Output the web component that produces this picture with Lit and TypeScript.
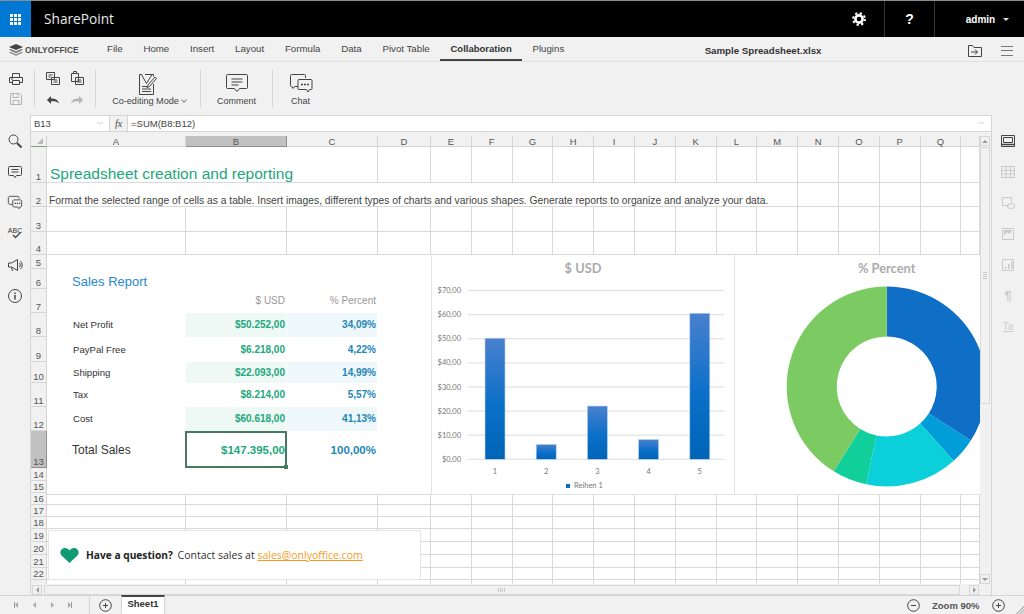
import { LitElement, html, css, svg } from "lit";
import { customElement } from "lit/decorators.js";

const TABS = ["File", "Home", "Insert", "Layout", "Formula", "Data", "Pivot Table", "Collaboration", "Plugins"];
const COLS = ["A", "B", "C", "D", "E", "F", "G", "H", "I", "J", "K", "L", "M", "N", "O", "P", "Q", ""];
const ROW_COUNT = 23;

const REPORT = [
  { label: "Net Profit", usd: "$50.252,00", pct: "34,09%", band: true },
  { label: "PayPal Free", usd: "$6.218,00", pct: "4,22%", band: false },
  { label: "Shipping", usd: "$22.093,00", pct: "14,99%", band: true },
  { label: "Tax", usd: "$8.214,00", pct: "5,57%", band: false },
  { label: "Cost", usd: "$60.618,00", pct: "41,13%", band: true },
];

const BARS = [50.25, 6.2, 22.1, 8.2, 60.6];
const SLICES = [
  { pct: 34.09, color: "#0f6fc6" },
  { pct: 4.22, color: "#009dd9" },
  { pct: 14.99, color: "#0bd0d9" },
  { pct: 5.57, color: "#10cf9b" },
  { pct: 41.13, color: "#7cca62" },
];

const icon = (size: number, body: unknown, cls = "") =>
  html`<svg class="i ${cls}" width=${size} height=${size} viewBox="0 0 ${size} ${size}">${body}</svg>`;

const ICONS = {
  print: svg`<path d="M4.5 6V2.5h7V6M4.5 11.5H1.5v-5h13v5h-3M4.5 9.5h7v4h-7z"/><path d="M3 8h2" />`,
  save: svg`<path d="M2.5 2.5h9l2 2v9h-11zM5 2.5v4h5v-4M5 13.5v-4h6v4"/>`,
  copy: svg`<path d="M1.5 2.5h8v7h-8zM6.5 7.5h8v7h-8zM3.5 5h4M3.5 7h2M8.5 10h4M8.5 12h4"/>`,
  paste: svg`<path d="M2.5 3.5h7v8h-7zM4.5 3.5v-2h3v2M6.5 7.5h8v7h-8zM8.5 10h4M8.5 12h4"/>`,
  undo: svg`<path class="solid" d="M2 8l4-4v2.5c4 0 7 1 8 5-2-2-4-2.5-8-2.3V12z"/>`,
  redo: svg`<path class="solid" d="M14 8l-4-4v2.5c-4 0-7 1-8 5 2-2 4-2.5 8-2.3V12z"/>`,
  coedit: svg`<path d="M6 2.5H3.5v20h14V12M15 2.5h2.5v2M6 17h9M6 19.5h9M6 14.5h5M5.5 2.5l5 9M9 2.5h7l-5.5 9M12 13l7-8 1.5 1.5-7 8-2.5 1z"/>`,
  comment: svg`<path d="M2.5 2.5h19a1 1 0 0 1 1 1v12a1 1 0 0 1-1 1h-7L12 19.5l-2.500-3h-7a1 1 0 0 1-1-1v-12a1 1 0 0 1 1-1zM6.5 7h11M6.5 10h11M6.5 13h7"/>`,
  chat: svg`<path d="M9 14.5H5.5l-1.5 2-1-2h-.5a1 1 0 0 1-1-1v-10a1 1 0 0 1 1-1h13a1 1 0 0 1 1 1V6M10 7.5h12a1 1 0 0 1 1 1v8a1 1 0 0 1-1 1h-1.5L19 20l-1.5-2.500H10a1 1 0 0 1-1-1v-8a1 1 0 0 1 1-1z"/><path d="M12 12.5h2M15 12.5h2M18 12.5h2" stroke-width="1.5"/>`,
  search: svg`<circle cx="6.5" cy="6.5" r="4.5"/><path d="M10 10l4.5 4.5" stroke-width="2"/>`,
  sideComment: svg`<path d="M2.5 2.5h11a1 1 0 0 1 1 1v7a1 1 0 0 1-1 1H9.5L8 13.5l-1.5-2h-4a1 1 0 0 1-1-1v-7a1 1 0 0 1 1-1zM4.5 5.5h7M4.5 8h7"/>`,
  sideChat: svg`<path d="M6 10.5H2.5l-1-1v-7l1-1h10l1 1V4M7.5 5.5h8l1 1v6l-1 1h-1l-1 2-1.5-2H7.5l-1-1v-6z"/><path d="M8.5 9.5H10M11 9.5h1.5M13.5 9.5H15" stroke-width="1.5"/>`,
  check: svg`<path d="M5 12l2.5 2.5 5-5" stroke-width="1.3"/>`,
  speaker: svg`<path d="M1.5 6h3l6-3.5v11l-6-3.5h-3zM4.5 10.5l1 3.5M12.5 6a3 3 0 0 1 0 4M13.5 4a5.5 5.5 0 0 1 0 8"/>`,
  info: svg`<circle cx="8" cy="8" r="6.5"/><path d="M8 7v4.5" stroke-width="1.5"/><path d="M8 4.5V6" stroke-width="1.5"/>`,
  cell: svg`<path d="M1.5 2.5h13v11h-13zM3.5 4.5h9v5h-9z"/><path d="M1.5 11.5h13" stroke-width="1.5"/>`,
  table: svg`<path d="M1.5 2.5h13v11h-13zM1.5 6.5h13M1.5 10h13M6 2.5v11M10.5 2.5v11"/>`,
  shape: svg`<path d="M9 10.5H2.5v-8h9v5"/><ellipse cx="11" cy="11" rx="4" ry="2.5"/>`,
  image: svg`<path d="M2.5 2.5h11v11h-11z"/><path class="solid" d="M4 10l3-4 2 2 3-3V4H4z"/>`,
  chart: svg`<path d="M2.5 2.5h11v11h-11z"/><path class="solid" d="M5 12h1.5v-2H5zM8 12h1.5V7H8zM11 12h1.5V4.5H11z"/>`,
  folder: svg`<path d="M1.5 13.5v-11h4L7 4.5h7.5v9zM4 9h6.5M8 6.5L10.5 9 8 11.5"/>`,
  minus: svg`<circle cx="6.5" cy="6.5" r="5.8"/><path d="M4 6.5h5"/>`,
  plus: svg`<circle cx="6.5" cy="6.5" r="5.8"/><path d="M4 6.5h5M6.5 4v5"/>`,
};

@customElement("app-root")
export class AppRoot extends LitElement {
  static styles = css`
    :host {
      display: flex;
      flex-direction: column;
      width: 1024px;
      height: 614px;
      overflow: hidden;
      background: #f1f1f1;
      font-family: "Liberation Sans", Arial, sans-serif;
      color: #444;
    }
    .i { fill: none; stroke: #444; stroke-width: 1; display: block; flex: none; }
    .i .solid { fill: #444; stroke: none; }
    .faded { opacity: 0.35; }
    .faint { opacity: 0.22; }

    .top {
      height: 36px;
      flex: none;
      display: flex;
      align-items: stretch;
      background: #000;
      border-top: 1px solid #8c8c8c;
      color: #fff;
    }
    .waffle {
      width: 31px;
      background: #0078d4;
      display: flex;
      align-items: center;
      justify-content: center;
    }
    .dots {
      display: grid;
      grid-template-columns: repeat(3, 3px);
      grid-auto-rows: 3px;
      gap: 1px;
    }
    .dots span { background: #fff; }
    .brand {
      margin-left: 13px;
      font: 13.7px "Open Sans", sans-serif;
      line-height: 35px;
      color: #e8e8e8;
      flex: 1;
    }
    .topbtn {
      display: flex;
      align-items: center;
      justify-content: center;
      border-left: 1px solid #333;
    }
    .gear { width: 50px; border: 0; padding-left: 0; }
    .help { width: 49px; font-size: 14px; font-weight: 700; }
    .user { width: 90px; font-size: 10px; font-weight: 700; gap: 8px; padding-left: 16px; box-sizing: border-box; }
    .caret { width: 0; height: 0; border: 3px solid transparent; border-top: 3px solid #ddd; border-bottom: 0; }

    .menu {
      height: 24px;
      flex: none;
      display: flex;
      align-items: stretch;
      border-bottom: 1px solid #e0e0e0;
    }
    .logo {
      width: 96.6px;
      box-sizing: border-box;
      padding: 1px 0 0 9px;
      display: flex;
      align-items: center;
      gap: 2px;
      font-size: 8.3px;
      font-weight: 700;
      letter-spacing: 0.1px;
      color: #4a4a4a;
    }
    .tab {
      padding: 0 10.4px;
      font-size: 9.7px;
      line-height: 24px;
      color: #444;
    }
    .tab.on {
      font-size: 9.5px;
      font-weight: 700;
      color: #333;
      box-shadow: inset 0 -2px 0 #444;
    }
    .title {
      margin-left: 130px;
      font-size: 9.7px;
      font-weight: 700;
      line-height: 28px;
      color: #333;
      flex: 1;
    }
    .menuicons {
      display: flex;
      align-items: center;
      gap: 18px;
      padding: 3px 11px 0 0;
    }
    .burger { width: 12px; height: 8px; border-top: 1px solid #777; border-bottom: 1px solid #777; position: relative; }
    .burger::after { content: ""; position: absolute; left: 0; right: 0; top: 3px; border-top: 1px solid #777; }

    .tools {
      height: 53px;
      flex: none;
      display: flex;
      align-items: center;
      box-sizing: border-box;
      padding-left: 8px;
    }
    .sep { width: 1px; height: 37px; background: #d5d5d5; flex: none; }
    .pair {
      display: flex;
      flex-direction: column;
      gap: 4px;
      margin-right: 10px;
    }
    .quad {
      display: grid;
      grid-template-columns: 16px 16px;
      column-gap: 8px;
      row-gap: 6px;
      margin: 0 10px;
    }
    .big {
      display: flex;
      flex-direction: column;
      align-items: center;
      justify-content: flex-end;
      height: 40px;
      margin-bottom: 6px;
      font-size: 9px;
      color: #444;
    }
    .big small {
      display: inline-block;
      width: 3px;
      height: 3px;
      margin: 0 0 2px 3px;
      border-right: 1px solid #888;
      border-bottom: 1px solid #888;
      transform: rotate(45deg);
    }
    .big.coedit { width: 104px; font-size: 9.1px; }
    .big.coedit div { padding-left: 2px; }
    .big.cmt { width: 71px; }
    .big.chat { width: 55px; }

    .body { flex: 1; min-height: 0; display: flex; }
    .side {
      width: 30px;
      flex: none;
      border-right: 1px solid #d5d5d5;
      display: flex;
      flex-direction: column;
      align-items: center;
      padding-top: 18px;
      box-sizing: content-box;
    }
    .side.left { gap: 15px; }
    .side.left svg { height: 16px; }
    .abc { font-size: 7px; font-weight: 400; line-height: 9px; color: #333; height: 16px; position: relative; }
    .abc svg { position: absolute; left: 0; top: -3px; }
    .side.right {
      width: 32px;
      border-right: 0;
      border-left: 1px solid #d5d5d5;
      gap: 15px;
    }
    .glyph { height: 16px; line-height: 16px; font-size: 13px; color: #444; opacity: 0.22; font-weight: 700; }
    .glyph.ta { font-size: 10px; font-weight: 400; text-decoration: underline; }

    .main { flex: 1; min-width: 0; display: flex; flex-direction: column; }
    .fbar {
      height: 17px;
      flex: none;
      display: flex;
      background: #fff;
      border-top: 1px solid #d5d5d5;
      border-bottom: 1px solid #d5d5d5;
      box-sizing: border-box;
      font-size: 9.5px;
      line-height: 15px;
      color: #444;
    }
    .name {
      width: 79px;
      box-sizing: border-box;
      padding-left: 3px;
      display: flex;
      justify-content: space-between;
      align-items: center;
      padding-right: 5px;
      border-right: 1px solid #d5d5d5;
    }
    .chev { font-size: 7px; color: #888; }
    .fx {
      width: 17px;
      text-align: center;
      background: #f1f1f1;
      font: italic 10px "Liberation Serif", serif;
      line-height: 15px;
      border-right: 1px solid #d5d5d5;
    }
    .formula { flex: 1; padding-left: 3px; font-size: 9.5px; }
    .fbar .end { padding-right: 6px; }

    .sheetrow { flex: none; height: 448px; margin-top: 4px; display: flex; }
    .view {
      position: relative;
      width: 949px;
      overflow: hidden;
      background: #fff;
    }
    .grid {
      display: grid;
      grid-template-columns: 16px 139px 101px 91px 53px repeat(13, 40.8px) 19px;
      grid-template-rows: 11px 36px 24px 25px 23px 14px 20px 24px 24px 25px 21px 24px 24px 37px 13px 12px 12px 12px 12px 13px 13px 13px 12px 13px;
    }
    .cell {
      border-right: 1px solid #d9d9d9;
      border-bottom: 1px solid #d9d9d9;
      min-width: 0;
      white-space: nowrap;
    }
    .span3 { grid-column: span 3; }
    .span13 { grid-column: span 13; }
    .h1 {
      font-size: 15.5px;
      color: #22a77c;
      line-height: 17px;
      padding: 18px 0 0 3px;
    }
    .h2 {
      font-size: 10.3px;
      color: #444;
      line-height: 12px;
      padding: 12px 0 0 2px;
    }
    .corner, .colh, .rowh {
      background: #f1f1f1;
      font-size: 9.5px;
      color: #555;
      border-right: 1px solid #d5d5d5;
      border-bottom: 1px solid #d5d5d5;
      box-sizing: border-box;
      text-align: center;
    }
    .colh { line-height: 12px; }
    .rowh {
      display: flex;
      align-items: flex-end;
      justify-content: center;
      line-height: 11px;
      overflow: hidden;
    }
    .corner { position: relative; border-bottom: 1px solid #7f9f7f; }
    .corner::after {
      content: "";
      position: absolute;
      right: 3px;
      bottom: 2px;
      border: 3px solid transparent;
      border-right-color: #bbb;
      border-bottom-color: #bbb;
    }
    .colh.sel, .rowh.sel {
      background: #c1c1c1;
      border-color: #8f8f8f;
    }

    .report {
      position: absolute;
      left: 16px;
      top: 119px;
      width: 384px;
      height: 239px;
      background: #fff;
      border-bottom: 1px solid #d9d9d9;
      display: grid;
      grid-template-columns: 139px 101px 91px;
      grid-template-rows: 34px 24px 24px 25px 21px 24px 24px 37px;
      align-items: stretch;
      color: #333;
    }
    .rc {
      display: flex;
      align-items: center;
      font-size: 9.6px;
      padding: 0 0 1px 26px;
    }
    .rt { grid-column: span 3; font-size: 13px; color: #2a88d0; padding: 19px 0 0 25px; }
    .rv {
      display: flex;
      align-items: center;
      justify-content: flex-end;
      font-size: 10px;
      font-weight: 700;
      padding-bottom: 1px;
    }
    .usd { color: #22a77c; margin-right: 1px; padding-right: 1px; }
    .pct { color: #1d86b5; margin-right: 1px; padding-right: 1px; }
    .usd.band { background: #eef8f5; }
    .pct.band { background: #eef7fa; }
    .muted { color: #999; font-weight: 400; padding-right: 2px; }
    .big-l { font-size: 12px; padding: 0 0 0 25px; }
    .total { font-size: 11.5px; padding-bottom: 0; }
    .selected {
      position: relative;
      margin: 0 0 0 -1px;
      border: 2px solid #46795f;
      box-sizing: border-box;
      padding-right: 0;
    }
    .selected::after {
      content: "";
      position: absolute;
      right: -3px;
      bottom: -3px;
      width: 4px;
      height: 4px;
      background: #46795f;
      border: 0;
    }

    .chart {
      position: absolute;
      top: 119px;
      height: 240px;
      background: #fff;
      border-left: 1px solid #e3e3e3;
      border-bottom: 1px solid #e3e3e3;
      box-sizing: border-box;
      overflow: hidden;
    }
    .chart.bars { left: 400px; width: 303px; }
    .chart.donut { left: 703px; width: 246px; }
    .chart svg { display: block; position: absolute; left: -1px; top: 0; }
    .axis { font: 7.5px Lato, sans-serif; fill: #777; }
    .ctitle { font: 700 12.8px Lato, sans-serif; fill: #ababab; }

    .contact {
      position: absolute;
      left: 17px;
      top: 394px;
      width: 373px;
      height: 50px;
      background: #fff;
      border: 1px solid #e6e6e6;
      box-sizing: border-box;
      display: flex;
      align-items: center;
      padding-left: 11px;
      font: 10.5px "Open Sans", sans-serif;
      color: #333;
      white-space: pre;
    }
    .contact svg { margin-right: 7px; }
    .contact b { font-size: 10.2px; font-weight: 700; margin-right: 2px; color: #222; }
    .contact a { color: #f59b23; text-decoration: underline; }

    .vscroll {
      width: 11px;
      margin-left: 0;
      flex: none;
      display: flex;
      flex-direction: column;
      box-sizing: border-box;
    }
    .sb-btn {
      flex: none;
      width: 10px;
      height: 10px;
      box-sizing: border-box;
      border: 1px solid #d5d5d5;
      background: #f1f1f1;
      display: flex;
      align-items: center;
      justify-content: center;
    }
    .tri { width: 0; height: 0; border: 3px solid transparent; }
    .tri.up { border-bottom-color: #999; border-top: 0; }
    .tri.down { border-top-color: #999; border-bottom: 0; }
    .tri.l { border-right-color: #999; border-left: 0; }
    .tri.r { border-left-color: #999; border-right: 0; }
    .vthumb {
      height: 257px;
      width: 10px;
      margin-top: 1px;
      box-sizing: border-box;
      border: 1px solid #d9d9d9;
      display: flex;
      align-items: center;
      justify-content: center;
      flex: none;
    }
    .grip { width: 4px; height: 8px; background: repeating-linear-gradient(#c8c8c8 0 1px, transparent 1px 2px); }
    .grip.h { width: 8px; height: 4px; background: repeating-linear-gradient(90deg, #c8c8c8 0 1px, transparent 1px 2px); }
    .spacer { flex: 1; }
    .hscroll {
      height: 10px;
      flex: none;
      margin-top: 1px;
      display: flex;
      gap: 2px;
      padding-left: 1px;
    }
    .hthumb {
      width: 916px;
      box-sizing: border-box;
      border: 1px solid #d9d9d9;
      display: flex;
      align-items: center;
      justify-content: center;
    }
    .hscroll .sb-btn:last-child { margin-left: 7px; }

    .bottom {
      height: 19px;
      flex: none;
      display: flex;
      align-items: stretch;
      border-top: 1px solid #d5d5d5;
      box-sizing: border-box;
      position: relative;
    }
    .nav {
      width: 90px;
      box-sizing: border-box;
      border-right: 1px solid #d5d5d5;
      display: flex;
      align-items: center;
      gap: 12px;
      padding-left: 13px;
    }
    .nav .n { width: 6px; display: flex; justify-content: center; align-items: center; }
    .nav .tri { border-width: 3px; opacity: 0.8; }
    .nav .bar { width: 1px; height: 6px; background: #999; flex: none; }
    .addsheet { width: 31px; display: flex; align-items: center; justify-content: center; }
    .sheet {
      width: 44px;
      background: #fff;
      border-top: 2px solid #444;
      border-right: 1px solid #d5d5d5;
      border-left: 1px solid #d5d5d5;
      box-sizing: border-box;
      text-align: center;
      font-size: 9.5px;
      font-weight: 700;
      line-height: 14px;
      color: #333;
      margin-top: -1px;
    }
    .zoom {
      margin-left: auto;
      display: flex;
      align-items: center;
      gap: 12px;
      padding-right: 19px;
      font-size: 9.5px;
      font-weight: 700;
      color: #555;
    }
    .zoom span { width: 48px; white-space: nowrap; }
    .hatch {
      position: absolute;
      right: 0;
      bottom: 0;
      width: 9px;
      height: 9px;
      background: repeating-linear-gradient(135deg, transparent 0 1px, #bbb 1px 2px);
      clip-path: polygon(100% 0, 100% 100%, 0 100%);
    }
  `;

  private renderCells() {
    const cells = [];
    cells.push(html`<div class="corner"></div>`);
    for (const c of COLS) cells.push(html`<div class="colh ${c === "B" ? "sel" : ""}">${c}</div>`);
    for (let r = 1; r <= ROW_COUNT; r++) {
      cells.push(html`<div class="rowh ${r === 13 ? "sel" : ""}">${r}</div>`);
      if (r === 1) {
        cells.push(html`<div class="cell span3 h1">Spreadsheet creation and reporting</div>`);
        for (let i = 3; i < COLS.length; i++) cells.push(html`<div class="cell"></div>`);
      } else if (r === 2) {
        cells.push(html`<div class="cell span13 h2">Format the selected range of cells as a table. Insert images, different types of charts and various shapes. Generate reports to organize and analyze your data.</div>`);
        for (let i = 13; i < COLS.length; i++) cells.push(html`<div class="cell"></div>`);
      } else {
        for (let i = 0; i < COLS.length; i++) cells.push(html`<div class="cell"></div>`);
      }
    }
    return cells;
  }

  private renderBars() {
    const base = 204.3;
    const unit = 2.41;
    const ticks = [0, 10, 20, 30, 40, 50, 60, 70];
    return svg`
      <defs>
        <linearGradient id="barfill" x1="0" y1="0" x2="0" y2="1">
          <stop offset="0" stop-color="#4a80ce" />
          <stop offset="0.55" stop-color="#0b70c8" />
          <stop offset="1" stop-color="#0064b6" />
        </linearGradient>
      </defs>
      <text class="ctitle" x="152" y="18" text-anchor="middle">$ USD</text>
      ${ticks.map((t) => {
        const y = base - t * unit;
        return svg`
          <line x1="37" x2="293" y1=${y} y2=${y} stroke="#dcdcdc" />
          <text class="axis" x="30" y=${y + 2.5} text-anchor="end">$${t},00</text>`;
      })}
      ${BARS.map((v, i) => {
        const x = 54 + i * 51.2;
        return svg`
          <rect x=${x} y=${base - v * unit} width="20" height=${v * unit} fill="url(#barfill)" stroke="#b9d3ef" stroke-width="0.6" />
          <text class="axis" x=${x + 10} y="219" text-anchor="middle">${i + 1}</text>`;
      })}
      <rect x="135" y="229" width="4" height="4" fill="#0b6ec4" />
      <text class="axis" x="143" y="233">Reihen 1</text>`;
  }

  private renderDonut() {
    const cx = 152.7;
    const cy = 131.5;
    const R = 100;
    const r = 50;
    let a = 0;
    const pt = (rad: number, ang: number) => {
      const t = (ang * Math.PI) / 180;
      return `${(cx + rad * Math.sin(t)).toFixed(2)} ${(cy - rad * Math.cos(t)).toFixed(2)}`;
    };
    return svg`
      <text class="ctitle" x=${cx} y="18" text-anchor="middle">% Percent</text>
      ${SLICES.map((s) => {
        const from = a;
        const to = a + (s.pct * 360) / 100;
        a = to;
        const large = to - from > 180 ? 1 : 0;
        const d = `M${pt(R, from)} A${R} ${R} 0 ${large} 1 ${pt(R, to)} L${pt(r, to)} A${r} ${r} 0 ${large} 0 ${pt(r, from)} Z`;
        return svg`<path d=${d} fill=${s.color} />`;
      })}`;
  }

  render() {
    return html`
      <div class="top">
        <div class="waffle"><div class="dots">${Array.from({ length: 9 }, () => html`<span></span>`)}</div></div>
        <div class="brand">SharePoint</div>
        <div class="topbtn gear">
          <svg width="14" height="14" viewBox="0 0 14 14">
            <circle cx="7" cy="7" r="3.6" fill="none" stroke="#fff" stroke-width="2.6" />
            <circle cx="7" cy="7" r="5.9" fill="none" stroke="#fff" stroke-width="2" stroke-dasharray="2.3 2.33" />
          </svg>
        </div>
        <div class="topbtn help">?</div>
        <div class="topbtn user">admin <span class="caret"></span></div>
      </div>

      <div class="menu">
        <div class="logo">
          <svg width="14" height="12" viewBox="0 0 14 12">
            <path d="M7 0l7 3-7 3-7-3z" fill="#444" />
            <path d="M1.5 5L7 7.4 12.5 5 14 5.8 7 8.9 0 5.8z" fill="#666" />
            <path d="M1.5 7.8L7 10.2l5.5-2.4 1.5.8L7 11.7 0 8.6z" fill="#888" />
          </svg>
          ONLYOFFICE
        </div>
        ${TABS.map((t) => html`<div class="tab ${t === "Collaboration" ? "on" : ""}">${t}</div>`)}
        <div class="title">Sample Spreadsheet.xlsx</div>
        <div class="menuicons">
          ${icon(16, ICONS.folder)}
          <div class="burger"></div>
        </div>
      </div>

      <div class="tools">
        <div class="pair">
          ${icon(16, ICONS.print)}
          ${icon(16, ICONS.save, "faded")}
        </div>
        <div class="sep"></div>
        <div class="quad">
          ${icon(16, ICONS.copy)}
          ${icon(16, ICONS.paste)}
          ${icon(16, ICONS.undo)}
          ${icon(16, ICONS.redo, "faded")}
        </div>
        <div class="sep"></div>
        <div class="big coedit">${icon(24, ICONS.coedit)}<div>Co-editing Mode<small></small></div></div>
        <div class="sep"></div>
        <div class="big cmt">${icon(24, ICONS.comment)}<div>Comment</div></div>
        <div class="sep"></div>
        <div class="big chat">${icon(24, ICONS.chat)}<div>Chat</div></div>
      </div>

      <div class="body">
        <div class="side left">
          ${icon(16, ICONS.search)}
          ${icon(16, ICONS.sideComment)}
          ${icon(18, ICONS.sideChat)}
          <div class="abc">ABC${icon(16, ICONS.check)}</div>
          ${icon(16, ICONS.speaker)}
          ${icon(16, ICONS.info)}
        </div>

        <div class="main">
          <div class="fbar">
            <div class="name"><span>B13</span><span class="chev">﹀</span></div>
            <div class="fx">fx</div>
            <div class="formula">=SUM(B8:B12)</div>
            <div class="chev end">﹀</div>
          </div>
          <div class="sheetrow">
            <div class="view">
              <div class="grid">${this.renderCells()}</div>

              <div class="report">
                <div class="rc rt">Sales Report</div>
                <div class="rc"></div>
                <div class="rv muted">$ USD</div>
                <div class="rv muted">% Percent</div>
                ${REPORT.map((row) => html`
                  <div class="rc">${row.label}</div>
                  <div class="rv usd ${row.band ? "band" : ""}">${row.usd}</div>
                  <div class="rv pct ${row.band ? "band" : ""}">${row.pct}</div>`)}
                <div class="rc big-l">Total Sales</div>
                <div class="rv usd total selected">$147.395,00</div>
                <div class="rv pct total">100,00%</div>
              </div>

              <div class="chart bars"><svg width="303" height="240">${this.renderBars()}</svg></div>
              <div class="chart donut"><svg width="247" height="240">${this.renderDonut()}</svg></div>

              <div class="contact">
                <svg width="19" height="15" viewBox="0 0 19 15">
                  <path d="M9.5 15L1.5 7.5C-1.5 3.5 2 0 5 0c2 0 3.5 1 4.5 2.5C10.5 1 12 0 14 0c3 0 6.5 3.5 3.5 7.5z" fill="#129b73" />
                </svg>
                <b>Have a question?</b> Contact sales at <a>sales@onlyoffice.com</a>
              </div>
            </div>
            <div class="vscroll">
              <div class="sb-btn"><span class="tri up"></span></div>
              <div class="vthumb"><span class="grip"></span></div>
              <div class="spacer"></div>
              <div class="sb-btn"><span class="tri down"></span></div>
            </div>
          </div>
          <div class="hscroll">
            <div class="sb-btn"><span class="tri l"></span></div>
            <div class="hthumb"><span class="grip h"></span></div>
            <div class="sb-btn"><span class="tri r"></span></div>
          </div>
        </div>

        <div class="side right">
          ${icon(16, ICONS.cell)}
          ${icon(16, ICONS.table, "faint")}
          ${icon(16, ICONS.shape, "faint")}
          ${icon(16, ICONS.image, "faint")}
          ${icon(16, ICONS.chart, "faint")}
          <div class="glyph">¶</div>
          <div class="glyph ta">Ta</div>
        </div>
      </div>

      <div class="bottom">
        <div class="nav">
          <span class="n"><span class="bar"></span><span class="tri l"></span></span>
          <span class="n"><span class="tri l"></span></span>
          <span class="n"><span class="tri r"></span></span>
          <span class="n"><span class="tri r"></span><span class="bar"></span></span>
        </div>
        <div class="addsheet">${icon(13, ICONS.plus)}</div>
        <div class="sheet">Sheet1</div>
        <div class="zoom">
          ${icon(13, ICONS.minus)}
          <span>Zoom 90%</span>
          ${icon(13, ICONS.plus)}
        </div>
        <div class="hatch"></div>
      </div>
    `;
  }
}
